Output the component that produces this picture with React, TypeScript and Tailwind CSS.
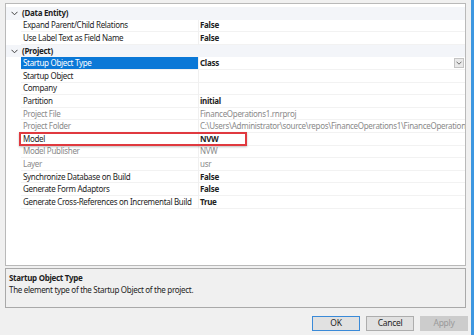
import type { ReactNode } from 'react';

type Row =
  | { kind: 'cat'; label: string }
  | { kind: 'prop'; label: string; value?: string; dim?: boolean; bold?: boolean; selected?: boolean };

const rows: Row[] = [
  { kind: 'cat', label: '(Data Entity)' },
  { kind: 'prop', label: 'Expand Parent/Child Relations', value: 'False', bold: true },
  { kind: 'prop', label: 'Use Label Text as Field Name', value: 'False', bold: true },
  { kind: 'cat', label: '(Project)' },
  { kind: 'prop', label: 'Startup Object Type', value: 'Class', bold: true, selected: true },
  { kind: 'prop', label: 'Startup Object' },
  { kind: 'prop', label: 'Company' },
  { kind: 'prop', label: 'Partition', value: 'initial', bold: true },
  { kind: 'prop', label: 'Project File', value: 'FinanceOperations1.rnrproj', dim: true },
  {
    kind: 'prop',
    label: 'Project Folder',
    value: 'C:\\Users\\Administrator\\source\\repos\\FinanceOperations1\\FinanceOperations1',
    dim: true,
  },
  { kind: 'prop', label: 'Model', value: 'NVW', bold: true },
  { kind: 'prop', label: 'Model Publisher', value: 'NVW', dim: true },
  { kind: 'prop', label: 'Layer', value: 'usr', dim: true },
  { kind: 'prop', label: 'Synchronize Database on Build', value: 'False', bold: true },
  { kind: 'prop', label: 'Generate Form Adaptors', value: 'False', bold: true },
  { kind: 'prop', label: 'Generate Cross-References on Incremental Build', value: 'True', bold: true },
];

function Chevron() {
  return (
    <svg width="7" height="5" viewBox="0 0 7 5" fill="none" stroke="#404040" strokeWidth="1" aria-hidden="true">
      <path d="M0.5 0.8 L3.5 3.8 L6.5 0.8" />
    </svg>
  );
}

function DropButton() {
  return (
    <span className="ml-auto mr-[1px] flex h-[10px] w-[10px] shrink-0 items-center justify-center border border-[#c4c4c4] bg-[#e9e9e9]">
      <svg width="6" height="4" viewBox="0 0 6 4" fill="none" stroke="#606060" strokeWidth="0.9" aria-hidden="true">
        <path d="M0.5 0.7 L3 3.2 L5.5 0.7" />
      </svg>
    </span>
  );
}

function Button({ children, primary, disabled }: { children: ReactNode; primary?: boolean; disabled?: boolean }) {
  return (
    <div
      className={`flex h-[15px] w-[48px] items-center justify-center border text-[8.5px] ${
        disabled
          ? 'border-[#cccccc] bg-[#cccccc] text-[#9a9a9a]'
          : primary
            ? 'border-[#3a8ad8] bg-[#e1e1e1] text-[#1e1e1e]'
            : 'border-[#adadad] bg-[#e1e1e1] text-[#1e1e1e]'
      }`}
    >
      {children}
    </div>
  );
}

export default function App() {
  return (
    <div className="flex h-[335px] w-[474px] overflow-hidden bg-[#f0f0f0] text-[8px] leading-none tracking-[-0.3px] text-[#1e1e1e] [font-family:'Noto_Sans','Open_Sans',sans-serif]">
      <div className="flex min-w-0 flex-1 flex-col pl-[5px] pr-[5px]">
        {/* property grid */}
        <div className="relative mt-[3px] flex h-[263px] flex-col border border-[#b9b9b9] bg-white pt-[3px]">
          {rows.map((row) =>
            row.kind === 'cat' ? (
              <div key={row.label} className="flex h-[12.6px] shrink-0 items-center bg-[#f3f5f9]">
                <span className="flex w-[15px] shrink-0 items-center justify-center pl-[2px]">
                  <Chevron />
                </span>
                <span className="pl-[1px] font-bold">{row.label}</span>
              </div>
            ) : (
              <div key={row.label} className="flex h-[12.6px] shrink-0 items-stretch">
                <span className="w-[15px] shrink-0" />
                <span
                  className={`flex w-[177px] shrink-0 items-center overflow-hidden whitespace-nowrap border-b border-[#f2f2f2] pl-[2px] ${
                    row.selected ? 'bg-[#0a78d7] text-white' : row.dim ? 'text-[#8a8a8a]' : ''
                  }`}
                >
                  {row.label}
                </span>
                <span className="w-px shrink-0 bg-[#f0f0f0]" />
                <span
                  className={`flex min-w-0 flex-1 items-center overflow-hidden whitespace-nowrap border-b border-[#f2f2f2] pl-[1px] ${
                    row.dim ? 'text-[#8a8a8a]' : ''
                  } ${row.bold ? 'font-bold' : ''}`}
                >
                  {row.value}
                  {row.selected ? <DropButton /> : null}
                </span>
              </div>
            ),
          )}
          {/* highlight around the Model row */}
          <div className="absolute left-[13px] top-[128px] h-[14px] w-[228px] border-2 border-[#e0393f] shadow-[0_1px_2px_rgba(0,0,0,0.25)]" />
        </div>

        {/* description */}
        <div className="mt-[2px] flex h-[40px] flex-col gap-[4px] border border-[#a9a9a9] bg-[#f0f0f0] pl-[3px] pt-[5px]">
          <span className="font-bold">Startup Object Type</span>
          <span>The element type of the Startup Object of the project.</span>
        </div>

        {/* buttons */}
        <div className="-mr-[2px] mt-[8px] flex justify-end gap-[6px]">
          <Button primary>OK</Button>
          <Button>Cancel</Button>
          <Button disabled>Apply</Button>
        </div>
      </div>
      <div className="w-[3px] shrink-0 bg-[#3d97e0]" />
    </div>
  );
}
